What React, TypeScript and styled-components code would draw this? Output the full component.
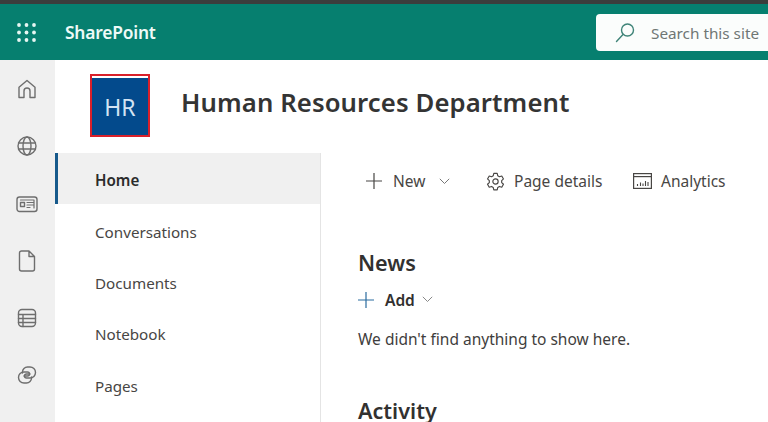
import styled, { createGlobalStyle } from 'styled-components';
import type { ReactNode } from 'react';

const GlobalStyle = createGlobalStyle`
  html, body {
    margin: 0;
    padding: 0;
    background: #fff;
    overflow: hidden;
  }
  * {
    box-sizing: border-box;
  }
`;

const Page = styled.div`
  width: 768px;
  height: 422px;
  overflow: hidden;
  display: flex;
  flex-direction: column;
  font-family: 'Noto Sans', 'Open Sans', sans-serif;
  color: #323130;
  background: #fff;
`;

const BrowserEdge = styled.div`
  height: 4px;
  flex: none;
  background: #3b3d3c;
`;

const SuiteBar = styled.header`
  height: 56px;
  flex: none;
  display: flex;
  align-items: center;
  background: #067f6f;
  color: #fff;
`;

const Waffle = styled.div`
  width: 55px;
  display: flex;
  justify-content: center;
  padding-right: 2px;
`;

const BrandName = styled.span`
  font-size: 17.4px;
  font-weight: 600;
  letter-spacing: -0.2px;
  margin-left: 10px;
  color: #eefaf7;
`;

const SearchBox = styled.div`
  width: 190px;
  height: 37px;
  margin-left: auto;
  margin-right: -18px;
  margin-top: 1px;
  padding-left: 18px;
  display: flex;
  align-items: center;
  gap: 15px;
  background: #fbfdfc;
  border-radius: 4px 0 0 4px;
  font-size: 15.3px;
  color: #6f7674;
  white-space: nowrap;
`;

const Body = styled.div`
  flex: 1;
  min-height: 0;
  display: flex;
`;

const Rail = styled.nav`
  width: 55px;
  flex: none;
  display: flex;
  flex-direction: column;
  align-items: center;
  gap: 35.3px;
  padding: 18px 2px 0 0;
  background: #f0f0f0;
`;

const Main = styled.div`
  flex: 1;
  min-width: 0;
  display: flex;
  flex-direction: column;
`;

const SiteHeader = styled.div`
  height: 93px;
  flex: none;
  display: flex;
  align-items: flex-start;
  padding: 14px 0 0 35px;
  gap: 31px;
`;

const SiteLogo = styled.div`
  width: 60px;
  height: 63px;
  padding: 2px 0 0;
  border: 2px solid #d9202a;
  display: flex;
`;

const LogoTile = styled.div`
  flex: 1;
  display: flex;
  align-items: center;
  justify-content: center;
  background: #034a8c;
  color: #d3e3f3;
  font-size: 23px;
`;

const SiteTitle = styled.h1`
  margin: 12px 0 0;
  font-size: 25.7px;
  line-height: 34px;
  font-weight: 600;
  letter-spacing: 0.1px;
  color: #343434;
  white-space: nowrap;
`;

const Columns = styled.div`
  flex: 1;
  min-height: 0;
  display: flex;
`;

const SideNav = styled.nav`
  width: 266px;
  flex: none;
  border-right: 1px solid #e4e4e4;
`;

const NavItem = styled.a<{ $active?: boolean }>`
  height: 51.4px;
  display: flex;
  align-items: center;
  padding-top: 3px;
  padding-left: ${({ $active }) => ($active ? '37px' : '40px')};
  font-size: 15.2px;
  font-weight: ${({ $active }) => ($active ? 600 : 400)};
  color: ${({ $active }) => ($active ? '#2b2b2b' : '#484644')};
  background: ${({ $active }) => ($active ? '#f0f0f0' : 'transparent')};
  border-left: ${({ $active }) => ($active ? '3px solid #175a8c' : '0')};
`;

const Content = styled.main`
  flex: 1;
  min-width: 0;
  padding-left: 37px;
`;

const CommandBar = styled.div`
  height: 56px;
  display: flex;
  align-items: center;
  padding-left: 8px;
`;

const Command = styled.div<{ $gap: number; $width: number }>`
  width: ${({ $width }) => $width}px;
  display: flex;
  align-items: center;
  gap: ${({ $gap }) => $gap}px;
  font-size: 15.5px;
  color: #484644;
  white-space: nowrap;
`;

const NewLabel = styled.span`
  margin-right: 3px;
`;

const Section = styled.section`
  margin-top: 40px;
`;

const SectionTitle = styled.h2`
  margin: 0;
  font-size: 21.6px;
  line-height: 28px;
  font-weight: 600;
  color: #323130;
`;

const AddRow = styled.div`
  height: 27px;
  margin-top: 9px;
  display: flex;
  align-items: center;
  gap: 11px;
  font-size: 15.5px;
  font-weight: 600;
  color: #323130;
`;

const AddLabel = styled.span`
  margin-right: -4px;
`;

const EmptyNote = styled.p`
  margin: 15px 0 0;
  font-size: 15.5px;
  line-height: 22px;
  color: #3f3e3d;
  white-space: nowrap;
`;

const ActivitySection = styled(Section)`
  margin-top: 47px;
`;

function RailIcon({ children }: { children: ReactNode }) {
  return (
    <svg width="22" height="22" viewBox="0 0 22 22" fill="none" stroke="#6e6e6e" strokeWidth="1.4" strokeLinejoin="round" strokeLinecap="round">
      {children}
    </svg>
  );
}

function WaffleIcon() {
  return (
    <svg width="19" height="19" viewBox="0 0 19 19" fill="#e6f6f2">
      {[2, 9.5, 17].map(y =>
        [2, 9.5, 17].map(x => <circle key={`${x}-${y}`} cx={x} cy={y} r="1.9" />),
      )}
    </svg>
  );
}

function SearchIcon() {
  return (
    <svg width="22" height="22" viewBox="0 0 22 22" fill="none" stroke="#3f8478" strokeWidth="1.4" strokeLinecap="round">
      <circle cx="13.5" cy="8" r="6" />
      <path d="M9 12.5 2.5 19.5" />
    </svg>
  );
}

function Plus({ color, size }: { color: string; size: number }) {
  return (
    <svg width={size} height={size} viewBox="0 0 16 16" fill="none" stroke={color} strokeWidth="1.2">
      <path d="M8 0v16M0 8h16" />
    </svg>
  );
}

function Chevron({ color }: { color: string }) {
  return (
    <svg width="11" height="7" viewBox="0 0 11 7" fill="none" stroke={color} strokeWidth="1">
      <path d="M.8.8 5.5 5.5 10.2.8" />
    </svg>
  );
}

function GearIcon() {
  return (
    <svg width="19" height="19" viewBox="0 0 20 20" fill="none" stroke="#484644" strokeWidth="1.2" strokeLinejoin="round">
      <path d="M8.2 1.4h3.6l.6 2.6 1.7 1 2.5-.8 1.8 3.1-1.9 1.8v2l1.9 1.8-1.8 3.1-2.5-.8-1.7 1-.6 2.6H8.2l-.6-2.6-1.7-1-2.5.8-1.8-3.1 1.9-1.8v-2L1.6 7.3l1.8-3.1 2.5.8 1.7-1z" />
      <circle cx="10" cy="10" r="2.8" />
    </svg>
  );
}

function AnalyticsIcon() {
  return (
    <svg width="19" height="16" viewBox="0 0 19 16" fill="none" stroke="#484644" strokeWidth="1.2">
      <rect x=".6" y=".6" width="17.8" height="14.8" />
      <path d="M.6 3.6h17.8" />
      <path d="M4.5 13v-2M7.5 13V9.5M10 13v-2.5M12.5 13V8M15 13V9" strokeWidth="1.1" />
    </svg>
  );
}

const railIcons = [
  <path key="home" d="M3 19.5V9.2L11 2.5l8 6.7v10.3h-5v-6.5a3 3 0 0 0-6 0v6.5z" />,
  <g key="globe">
    <circle cx="11" cy="11" r="9" />
    <ellipse cx="11" cy="11" rx="4" ry="9" />
    <path d="M2.5 8h17M2.5 14h17" />
  </g>,
  <g key="news">
    <rect x="1" y="4" width="20" height="14.5" rx="2.5" />
    <rect x="4.5" y="9.5" width="4" height="4" />
    <path d="M4.5 7h13M11 9.5h6.5M11 12h6.5M11 14.5h3M18 7v8" strokeWidth="1.2" />
  </g>,
  <path key="file" d="M3.5 3A2 2 0 0 1 5.500 1h7.500l5.500 5.500V19a2 2 0 0 1-2 2h-11a2 2 0 0 1-2-2zM13 1v5.500h5.500" />,
  <g key="list">
    <path d="M2.500 6a3.500 3.500 0 0 1 3.500-3.500h10a3.500 3.500 0 0 1 3.500 3.500v10a3.500 3.500 0 0 1-3.500 3.500H6a3.500 3.500 0 0 1-3.500-3.500z" />
    <path d="M2.500 7.500h17M2.500 11.500h17M2.500 15.500h17M7 7.500v12" />
  </g>,
  <g key="loop">
    <path d="M6.500 9V8a5 5 0 0 1 5-5H14a5.500 5.500 0 0 1 0 11h-3.500a2 2 0 0 1 0-4H14" />
    <path d="M15.500 13v1a5 5 0 0 1-5 5H8A5.500 5.500 0 0 1 8 8h3.500a2 2 0 0 1 0 4H8" />
  </g>,
];

const navItems = ['Home', 'Conversations', 'Documents', 'Notebook', 'Pages'];

export default function App() {
  return (
    <Page>
      <GlobalStyle />
      <BrowserEdge />
      <SuiteBar>
        <Waffle>
          <WaffleIcon />
        </Waffle>
        <BrandName>SharePoint</BrandName>
        <SearchBox>
          <SearchIcon />
          Search this site
        </SearchBox>
      </SuiteBar>
      <Body>
        <Rail>
          {railIcons.map(icon => (
            <RailIcon key={icon.key}>{icon}</RailIcon>
          ))}
        </Rail>
        <Main>
          <SiteHeader>
            <SiteLogo>
              <LogoTile>HR</LogoTile>
            </SiteLogo>
            <SiteTitle>Human Resources Department</SiteTitle>
          </SiteHeader>
          <Columns>
            <SideNav>
              {navItems.map(item => (
                <NavItem key={item} $active={item === 'Home'}>
                  {item}
                </NavItem>
              ))}
            </SideNav>
            <Content>
              <CommandBar>
                <Command $gap={11} $width={120}>
                  <Plus color="#484644" size={16} />
                  <NewLabel>New</NewLabel>
                  <Chevron color="#777" />
                </Command>
                <Command $gap={9} $width={147}>
                  <GearIcon />
                  Page details
                </Command>
                <Command $gap={9} $width={100}>
                  <AnalyticsIcon />
                  Analytics
                </Command>
              </CommandBar>
              <Section>
                <SectionTitle>News</SectionTitle>
                <AddRow>
                  <Plus color="#2b6c9f" size={16} />
                  <AddLabel>Add</AddLabel>
                  <Chevron color="#888" />
                </AddRow>
                <EmptyNote>We didn't find anything to show here.</EmptyNote>
              </Section>
              <ActivitySection>
                <SectionTitle>Activity</SectionTitle>
              </ActivitySection>
            </Content>
          </Columns>
        </Main>
      </Body>
    </Page>
  );
}
